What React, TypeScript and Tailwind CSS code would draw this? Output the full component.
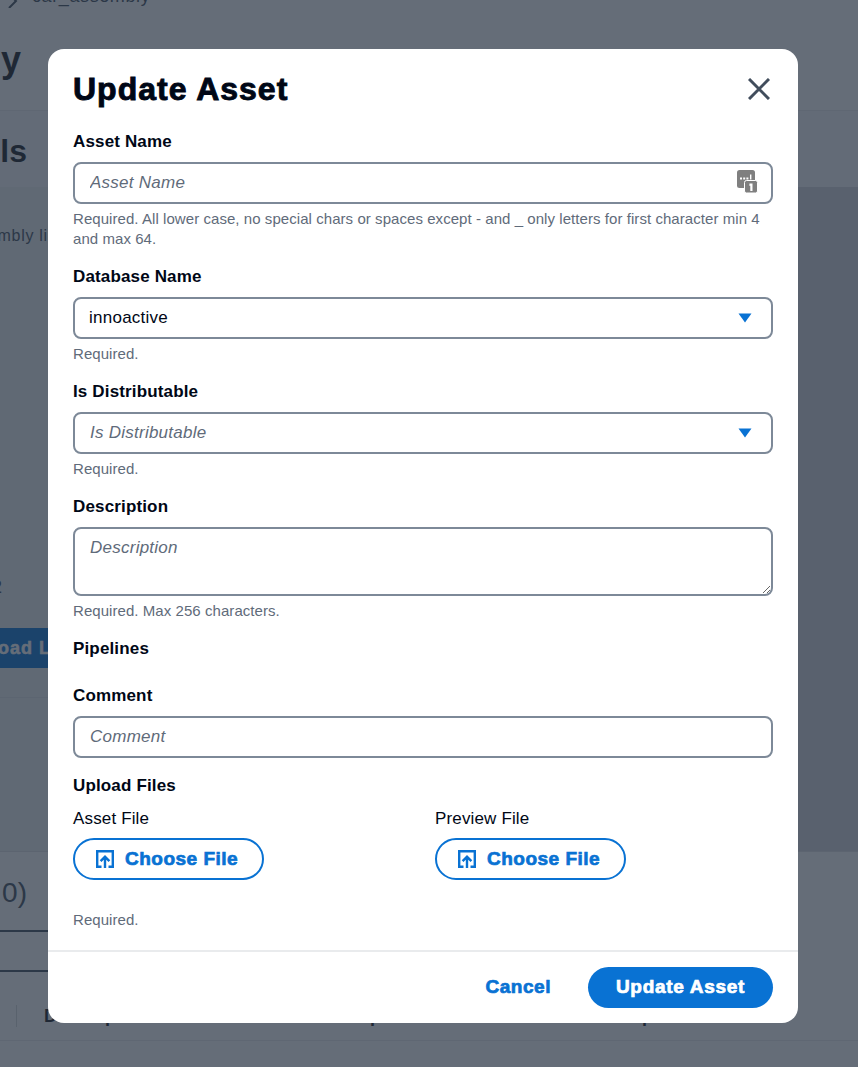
import { useState } from "react";

function ChevronDown() {
  return (
    <svg viewBox="0 0 14 10" className="h-[10px] w-[14px]">
      <path d="M0.5 0.5h13L7 9.5z" fill="#0972d3" />
    </svg>
  );
}

function CloseIcon() {
  return (
    <svg viewBox="0 0 22 22" className="size-[22px]" fill="none" stroke="#414d5c" strokeWidth="3">
      <path d="M1 1l20 20M21 1L1 21" />
    </svg>
  );
}

function UploadIcon() {
  return (
    <svg viewBox="0 0 18 18" className="size-[18px] shrink-0" fill="none" stroke="#0972d3" strokeWidth="2.4">
      <path d="M5.5 16.8H1.2V1.2h15.6v15.6h-4.3" />
      <path d="M9 18V7M4.6 11.2L9 6.8l4.4 4.4" />
    </svg>
  );
}

function PasswordIcon() {
  return (
    <svg viewBox="0 0 21 23" className="h-[23px] w-[21px]">
      <rect x="0" y="0" width="18" height="18" rx="2.5" fill="#7f7f7f" />
      <path d="M3 7.5h2v2H3zM6.2 7.5h2v2h-2zM9.4 7.5h2v2h-2z" fill="#fff" />
      <path d="M13 4.5h1.4v5H13z" fill="#fff" />
      <rect x="7.5" y="10.5" width="13" height="12.5" rx="2" fill="#7f7f7f" stroke="#fff" strokeWidth="1" />
      <path d="M12.5 13.5h3v7.5h-2.2v-5.3h-1z" fill="#fff" />
    </svg>
  );
}

function Label({ children }: { children: string }) {
  return <div className="text-[17px] leading-[20px] font-bold tracking-[0.15px] text-[#000716]">{children}</div>;
}

function Hint({ children }: { children: string }) {
  return <p className="mt-[5px] text-[15px] leading-[20px] tracking-[0.06px] text-[#5f6b7a]">{children}</p>;
}

const inputCls =
  "h-[42px] w-full rounded-lg border-2 border-[#7d8998] bg-white px-[15px] text-[17px] tracking-[0.25px] text-[#000716] outline-none placeholder:italic placeholder:text-[#5f6b7a]";

function SelectBox({ value, placeholder }: { value?: string; placeholder: string }) {
  return (
    <button className="flex h-[42px] w-full items-center justify-between rounded-lg border-2 border-[#7d8998] bg-white pr-[19px] pl-[14px] text-[17px] tracking-[0.25px]">
      {value ? (
        <span className="text-[#000716]">{value}</span>
      ) : (
        <span className="pl-px text-[#5f6b7a] italic">{placeholder}</span>
      )}
      <ChevronDown />
    </button>
  );
}

function ChooseFile() {
  return (
    <button className="flex h-[42px] w-[191px] items-center gap-[11px] rounded-full border-2 border-[#0972d3] bg-white pl-[21px] text-[19px] font-bold tracking-[0.5px] whitespace-nowrap text-[#0972d3] [-webkit-text-stroke:0.7px_#0972d3]">
      <UploadIcon />
      Choose File
    </button>
  );
}

function Backdrop() {
  return (
    <div className="flex h-full flex-col bg-white font-['Liberation_Sans',sans-serif] text-[#16191f]">
      <div className="flex h-[8px] items-end gap-[13px] pl-[7px] text-[18px] leading-[24px] tracking-[0.6px] text-[#414d5c]">
        <svg viewBox="0 0 10 14" className="h-[14px] w-[12px] shrink-0" fill="none" stroke="#414d5c" strokeWidth="2">
          <path d="M1 0l7 7-7 7" />
        </svg>
        <span className="whitespace-nowrap">car_assembly</span>
      </div>
      <div className="flex h-[102px] w-[21px] items-center justify-end pt-[2px]">
        <span className="text-[36px] font-bold whitespace-nowrap">Assembly</span>
      </div>
      <div className="flex h-[77px] border-t border-[#e9ebed] bg-[#f8f9fa]">
        <div className="flex h-[76px] w-[27px] items-center justify-end pt-[3px]">
          <span className="text-[32px] font-bold whitespace-nowrap">Details</span>
        </div>
      </div>
      <div className="flex h-[665px] border-b border-[#dfe1e4] bg-[#eef0f2]">
        <div className="w-[600px]">
          <div className="mt-[39px] -ml-[39px] text-[16px] leading-[20px] tracking-[0.7px] whitespace-nowrap text-[#414d5c]">
            assembly line
          </div>
          <div className="mt-[330px] flex w-[2px] justify-end overflow-hidden text-[18px] leading-[22px] text-[#414d5c]">
            2
          </div>
          <div className="mt-[30px] flex h-[40px] w-[60px] items-center bg-[#0972d3] text-[18px] font-bold tracking-[1px] whitespace-nowrap text-white [-webkit-text-stroke:0.5px_#fff]">
            <span className="-ml-[34px]">Upload List</span>
          </div>
          <div className="h-[30px] border-b border-[#e1e3e6]" />
        </div>
        <div className="ml-auto w-[200px] bg-[#d6d8dc]" />
      </div>
      <div className="w-[700px]">
        <div className="flex h-[78px] w-[27px] items-center justify-end pt-[4px] text-[28px] text-[#414d5c]">
          <span>0)</span>
        </div>
        <div className="h-[42px] border-y-2 border-[#414d5c]" />
      </div>
      <div className="flex h-[69px] items-center border-b border-[#e9ebed] pt-[20px] pl-[16px] text-[18px] font-bold tracking-[1px]">
        <span className="h-[22px] w-px bg-[#d5dbdb]" />
        <span className="ml-[27px] w-[312px]">Description</span>
        <span className="w-[272px]">Updated</span>
        <span>Upload</span>
      </div>
    </div>
  );
}

export default function App() {
  const [name, setName] = useState("");
  return (
    <div className="relative h-[1067px] w-[858px] overflow-hidden">
      <Backdrop />
      <div className="absolute inset-0 bg-[rgba(35,47,62,0.7)]" />
      <div className="absolute top-[49px] left-[48px] flex h-[974px] w-[750px] flex-col rounded-2xl bg-white font-['Liberation_Sans',sans-serif]">
        <div className="flex h-[83px] items-center justify-between px-[25px] pb-[3px]">
          <h1 className="text-[32px] leading-[40px] font-bold tracking-[1px] text-[#000716] [-webkit-text-stroke:0.9px_#000716]">
            Update Asset
          </h1>
          <button className="mr-[3px]">
            <CloseIcon />
          </button>
        </div>

        <div className="flex flex-1 flex-col px-[25px]">
          <Label>Asset Name</Label>
          <div className="relative mt-[10px]">
            <input
              className={inputCls}
              placeholder="Asset Name"
              value={name}
              onChange={(e) => setName(e.target.value)}
            />
            <span className="absolute top-[8px] right-[15px]">
              <PasswordIcon />
            </span>
          </div>
          <Hint>
            Required. All lower case, no special chars or spaces except - and _ only letters for first character min 4 and max 64.
          </Hint>

          <div className="mt-[18px]">
            <Label>Database Name</Label>
          </div>
          <div className="mt-[10px]">
            <SelectBox value="innoactive" placeholder="Database Name" />
          </div>
          <Hint>Required.</Hint>

          <div className="mt-[18px]">
            <Label>Is Distributable</Label>
          </div>
          <div className="mt-[10px]">
            <SelectBox placeholder="Is Distributable" />
          </div>
          <Hint>Required.</Hint>

          <div className="mt-[18px]">
            <Label>Description</Label>
          </div>
          <textarea
            className="mt-[10px] block h-[69px] w-full rounded-lg border-2 border-[#7d8998] bg-white px-[15px] py-[7px] text-[17px] leading-[24px] tracking-[0.25px] outline-none placeholder:italic placeholder:text-[#5f6b7a]"
            placeholder="Description"
          />
          <Hint>Required. Max 256 characters.</Hint>

          <div className="mt-[18px]">
            <Label>Pipelines</Label>
          </div>

          <div className="mt-[27px]">
            <Label>Comment</Label>
          </div>
          <input className={`mt-[10px] ${inputCls}`} placeholder="Comment" />

          <div className="mt-[18px]">
            <Label>Upload Files</Label>
          </div>
          <div className="mt-[13px] grid grid-cols-2 gap-x-6">
            <div>
              <div className="mb-[9px] text-[17px] leading-[20px] tracking-[0.15px] text-[#000716]">Asset File</div>
              <ChooseFile />
            </div>
            <div>
              <div className="mb-[9px] text-[17px] leading-[20px] tracking-[0.15px] text-[#000716]">Preview File</div>
              <ChooseFile />
            </div>
          </div>
          <div className="mt-[30px] text-[15px] leading-[20px] tracking-[0.06px] text-[#5f6b7a]">Required.</div>
        </div>

        <div className="flex h-[73px] items-center justify-end gap-[37px] border-t-2 border-[#e9ebed] px-[25px]">
          <button className="text-[19px] font-bold tracking-[0.55px] text-[#0972d3] [-webkit-text-stroke:0.7px_#0972d3]">
            Cancel
          </button>
          <button className="h-[41px] w-[185px] rounded-full bg-[#0972d3] text-[19px] font-bold tracking-[0.7px] text-white [-webkit-text-stroke:0.7px_#fff]">
            Update Asset
          </button>
        </div>
      </div>
    </div>
  );
}
